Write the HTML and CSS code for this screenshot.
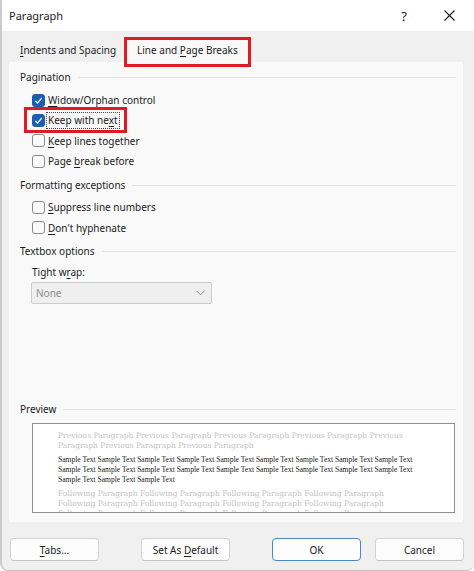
FILE: index.html
```html
<!DOCTYPE html>
<html lang="en">

<head>
    <meta charset="UTF-8">
    <meta name="viewport" content="width=device-width, initial-scale=1.0">
    <title>Paragraph</title>
    <link rel="stylesheet" href="styles.css">
</head>

<body>
    <div class="dialog">
        <!-- title bar -->
        <div class="titlebar">
            <span class="title">Paragraph</span>
            <span class="help">?</span>
            <svg class="close" width="11" height="11" viewBox="0 0 11 11">
                <path d="M0.5 0.5L10.5 10.5M10.5 0.5L0.5 10.5" stroke="#1a1a1a" stroke-width="1.1" fill="none" />
            </svg>
        </div>

        <!-- tabs -->
        <div class="tabs">
            <div class="tab"><u>I</u>ndents and Spacing</div>
            <div class="tab active">Line and <u>P</u>age Breaks<span class="mark"></span></div>
        </div>

        <div class="panel">
            <div class="group-title">Pagination</div>
            <div class="checks">
                <div class="check"><span class="box checked"><svg width="9" height="9" viewBox="0 0 9 9"><path d="M1.3 4.8L3.5 7L7.8 2" stroke="#fff" stroke-width="1.2" fill="none" /></svg></span><span><u>W</u>idow/Orphan control</span></div>
                <div class="check"><span class="box checked"><svg width="9" height="9" viewBox="0 0 9 9"><path d="M1.3 4.8L3.5 7L7.8 2" stroke="#fff" stroke-width="1.2" fill="none" /></svg></span><span class="focus">Keep with ne<u>x</u>t</span><span class="mark"></span></div>
                <div class="check"><span class="box"></span><span><u>K</u>eep lines together</span></div>
                <div class="check"><span class="box"></span><span>Page <u>b</u>reak before</span></div>
            </div>

            <div class="group-title second">Formatting exceptions</div>
            <div class="checks tight">
                <div class="check"><span class="box"></span><span><u>S</u>uppress line numbers</span></div>
                <div class="check"><span class="box"></span><span><u>D</u>on't hyphenate</span></div>
            </div>

            <div class="group-title second">Textbox options</div>
            <div class="field">
                <div class="field-label">Tight w<u>r</u>ap:</div>
                <div class="select">
                    <span>None</span>
                    <svg width="9" height="6" viewBox="0 0 9 6"><path d="M0.5 0.8L4.5 4.8L8.5 0.8" stroke="#8a8a8a" stroke-width="1" fill="none" /></svg>
                </div>
            </div>

            <div class="spacer"></div>

            <div class="group-title">Preview</div>
            <div class="preview">
                <div class="para grey">Previous Paragraph Previous Paragraph Previous Paragraph Previous Paragraph Previous<br>Paragraph Previous Paragraph Previous Paragraph</div>
                <div class="para sample">Sample Text Sample Text Sample Text Sample Text Sample Text Sample Text Sample Text Sample Text Sample Text<br>Sample Text Sample Text Sample Text Sample Text Sample Text Sample Text Sample Text Sample Text Sample Text<br>Sample Text Sample Text Sample Text</div>
                <div class="para grey">Following Paragraph Following Paragraph Following Paragraph Following Paragraph<br>Following Paragraph Following Paragraph Following Paragraph Following Paragraph<br>Following Paragraph Following Paragraph Following Paragraph Following Paragraph</div>
            </div>
        </div>

        <!-- buttons -->
        <div class="buttons">
            <div class="btn"><span><u>T</u>abs...</span></div>
            <div class="btn gap"><span>Set As <u>D</u>efault</span></div>
            <div class="btn gap default"><span>OK</span></div>
            <div class="btn near"><span>Cancel</span></div>
        </div>
    </div>
</body>

</html>
```

FILE: styles.css
```css
* {
    margin: 0;
    padding: 0;
}

body {
    font-family: "Noto Sans", "Liberation Sans", sans-serif;
    font-size: 10px;
    color: #1b1b1b;
}

u {
    text-decoration-thickness: 1px;
    text-underline-offset: 2px;
}

.dialog {
    width: 474px;
    height: 571px;
    box-sizing: border-box;
    background: #f0f0f0;
    border-left: 2px solid #cbcbcb;
    border-bottom: 1px solid #c4c4c4;
    border-radius: 0 0 8px 8px;
    display: flex;
    flex-direction: column;
    overflow: hidden;
}

/* title bar */
.titlebar {
    height: 31px;
    flex: 0 0 31px;
    background: #fff;
    display: flex;
    align-items: center;
    padding: 0 19px 0 7px;
    font-size: 11px;
}

.help {
    margin-left: auto;
    margin-right: 37px;
    font-size: 13px;
}

/* tabs */
.tabs {
    height: 31px;
    flex: 0 0 31px;
    display: flex;
    align-items: flex-end;
    padding-left: 7px;
}

.tab {
    height: 24px;
    line-height: 24px;
    padding: 0 11px;
}

.tab.active {
    background: #f9f9f9;
    position: relative;
    padding: 0 10px;
}

.tab .mark {
    position: absolute;
    left: -3px;
    right: -3px;
    top: -1px;
    bottom: -5px;
    border: 3px solid #e01b24;
}

/* panel */
.panel {
    flex: 0 0 460px;
    box-sizing: border-box;
    margin: 0 11px 0 7px;
    background: #f9f9f9;
    padding: 7px 7px 9px 11px;
    display: flex;
    flex-direction: column;
}

.group-title {
    display: flex;
    align-items: center;
    height: 16px;
    line-height: 16px;
}

.group-title::after {
    content: '';
    flex: 1;
    height: 1px;
    background: #e3e3e3;
    margin-left: 7px;
}

.group-title.second {
    margin-top: 5.5px;
}

.checks {
    padding: 5px 0 0 12px;
}

.checks.tight {
    padding-top: 4px;
}

.check {
    display: flex;
    align-items: center;
    gap: 3px;
    height: 20.4px;
    position: relative;
}

.check .mark {
    position: absolute;
    left: -8px;
    top: -3px;
    width: 103px;
    height: 26px;
    box-sizing: border-box;
    border: 3px solid #e01b24;
}

.focus {
    outline: 1px dotted #444;
    outline-offset: 0;
    line-height: 15px;
    padding: 0 1px;
    margin-left: -1px;
}

.box {
    width: 13px;
    height: 13px;
    box-sizing: border-box;
    border: 1px solid #8a8a8a;
    border-radius: 3px;
    background: #fbfbfb;
    display: flex;
    align-items: center;
    justify-content: center;
}

.box.checked {
    background: #1a5fb4;
    border-color: #1a5fb4;
}

/* tight wrap */
.field {
    padding: 5px 0 0 12px;
}

.field-label {
    height: 16px;
    line-height: 16px;
}

.select {
    margin: 2px 0 0 -1px;
    width: 181px;
    height: 22px;
    box-sizing: border-box;
    border: 1px solid #cccccc;
    border-radius: 2px;
    background: #efefef;
    color: #8d8d8d;
    display: flex;
    align-items: center;
    justify-content: space-between;
    padding: 0 6px 0 4px;
}

.spacer {
    flex: 1;
}

/* preview */
.preview {
    margin: 6px 1px 0 12px;
    height: 90px;
    box-sizing: border-box;
    border: 1px solid #8f8f8f;
    background: #fff;
    overflow: hidden;
    padding: 7px 0 0 25px;
    white-space: nowrap;
}

.para {
    line-height: 10px;
    margin-bottom: 4px;
}

.grey {
    font-family: "DejaVu Serif", serif;
    font-size: 7.55px;
    color: #c2c2c2;
}

.sample {
    font-family: "Liberation Serif", serif;
    font-size: 7.55px;
    color: #202020;
}

/* buttons */
.buttons {
    flex: 1;
    display: flex;
    align-items: flex-start;
    padding: 16px 0 0 8px;
}

.btn {
    width: 89px;
    height: 23px;
    box-sizing: border-box;
    border: 1px solid #d3d3d3;
    border-bottom-color: #c4c4c4;
    border-radius: 4px;
    background: #fdfdfd;
    display: flex;
    align-items: center;
    justify-content: center;
}

.btn.gap {
    margin-left: 42px;
}

.btn.near {
    margin-left: 14px;
}

.btn.default {
    border: 1px solid #4a86c8;
}
```
